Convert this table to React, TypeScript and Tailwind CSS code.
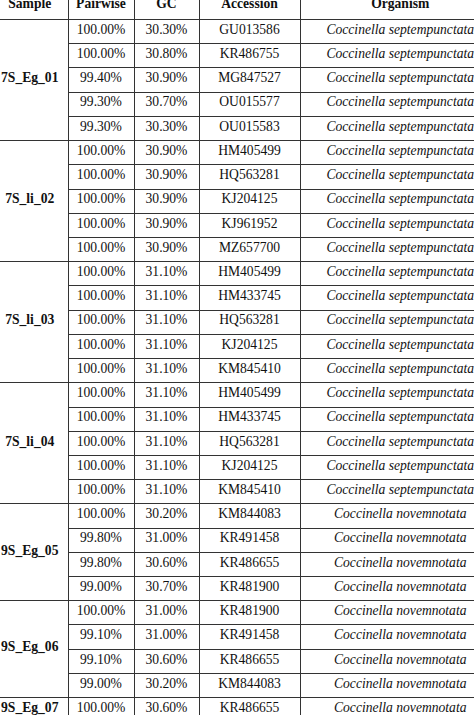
import React from 'react'

type Hit = { pairwise: string; gc: string; accession: string; organism: string }
type Group = { sample: string; hits: Hit[] }

const SEPT = 'Coccinella septempunctata'
const NOVE = 'Coccinella novemnotata'

const li34: Hit[] = [
  { pairwise: '100.00%', gc: '31.10%', accession: 'HM405499', organism: SEPT },
  { pairwise: '100.00%', gc: '31.10%', accession: 'HM433745', organism: SEPT },
  { pairwise: '100.00%', gc: '31.10%', accession: 'HQ563281', organism: SEPT },
  { pairwise: '100.00%', gc: '31.10%', accession: 'KJ204125', organism: SEPT },
  { pairwise: '100.00%', gc: '31.10%', accession: 'KM845410', organism: SEPT },
]

const groups: Group[] = [
  {
    sample: '7S_Eg_01',
    hits: [
      { pairwise: '100.00%', gc: '30.30%', accession: 'GU013586', organism: SEPT },
      { pairwise: '100.00%', gc: '30.80%', accession: 'KR486755', organism: SEPT },
      { pairwise: '99.40%', gc: '30.90%', accession: 'MG847527', organism: SEPT },
      { pairwise: '99.30%', gc: '30.70%', accession: 'OU015577', organism: SEPT },
      { pairwise: '99.30%', gc: '30.30%', accession: 'OU015583', organism: SEPT },
    ],
  },
  {
    sample: '7S_li_02',
    hits: [
      { pairwise: '100.00%', gc: '30.90%', accession: 'HM405499', organism: SEPT },
      { pairwise: '100.00%', gc: '30.90%', accession: 'HQ563281', organism: SEPT },
      { pairwise: '100.00%', gc: '30.90%', accession: 'KJ204125', organism: SEPT },
      { pairwise: '100.00%', gc: '30.90%', accession: 'KJ961952', organism: SEPT },
      { pairwise: '100.00%', gc: '30.90%', accession: 'MZ657700', organism: SEPT },
    ],
  },
  { sample: '7S_li_03', hits: li34 },
  { sample: '7S_li_04', hits: li34 },
  {
    sample: '9S_Eg_05',
    hits: [
      { pairwise: '100.00%', gc: '30.20%', accession: 'KM844083', organism: NOVE },
      { pairwise: '99.80%', gc: '31.00%', accession: 'KR491458', organism: NOVE },
      { pairwise: '99.80%', gc: '30.60%', accession: 'KR486655', organism: NOVE },
      { pairwise: '99.00%', gc: '30.70%', accession: 'KR481900', organism: NOVE },
    ],
  },
  {
    sample: '9S_Eg_06',
    hits: [
      { pairwise: '100.00%', gc: '31.00%', accession: 'KR481900', organism: NOVE },
      { pairwise: '99.10%', gc: '31.00%', accession: 'KR491458', organism: NOVE },
      { pairwise: '99.10%', gc: '30.60%', accession: 'KR486655', organism: NOVE },
      { pairwise: '99.00%', gc: '30.20%', accession: 'KM844083', organism: NOVE },
    ],
  },
  {
    sample: '9S_Eg_07',
    hits: [{ pairwise: '100.00%', gc: '30.60%', accession: 'KR486655', organism: NOVE }],
  },
]

const cell = 'border border-[#333] text-center align-middle p-0 pb-[4px] whitespace-nowrap'

export default function App() {
  return (
    <div className="w-[474px] h-[715px] overflow-hidden bg-white text-[#111] font-['Liberation_Serif','Times_New_Roman',serif] text-[13.6px] leading-none">
      <table className="table-fixed border-collapse w-[500px] -ml-[8px] -mt-[7.5px]">
        <colgroup>
          <col className="w-[76px]" />
          <col className="w-[66px]" />
          <col className="w-[65px]" />
          <col className="w-[101px]" />
          <col className="w-[200px]" />
        </colgroup>
        <thead>
          <tr className="h-[27px]">
            <th className={`${cell} font-bold border-t-0 border-l-0`}>Sample</th>
            <th className={`${cell} font-bold border-t-0`}>Pairwise</th>
            <th className={`${cell} font-bold border-t-0`}>GC</th>
            <th className={`${cell} font-bold border-t-0`}>Accession</th>
            <th className={`${cell} font-bold border-t-0 border-r-0`}>Organism</th>
          </tr>
        </thead>
        <tbody>
          {groups.map((g) =>
            g.hits.map((h, i) => (
              <tr key={g.sample + i} className="h-[24.23px]">
                {i === 0 && (
                  <td rowSpan={g.hits.length} className={`${cell} font-bold border-l-0`}>
                    {g.sample}
                  </td>
                )}
                <td className={cell}>{h.pairwise}</td>
                <td className={cell}>{h.gc}</td>
                <td className={cell}>{h.accession}</td>
                <td className={`${cell} italic border-r-0`}>{h.organism}</td>
              </tr>
            ))
          )}
        </tbody>
      </table>
    </div>
  )
}
